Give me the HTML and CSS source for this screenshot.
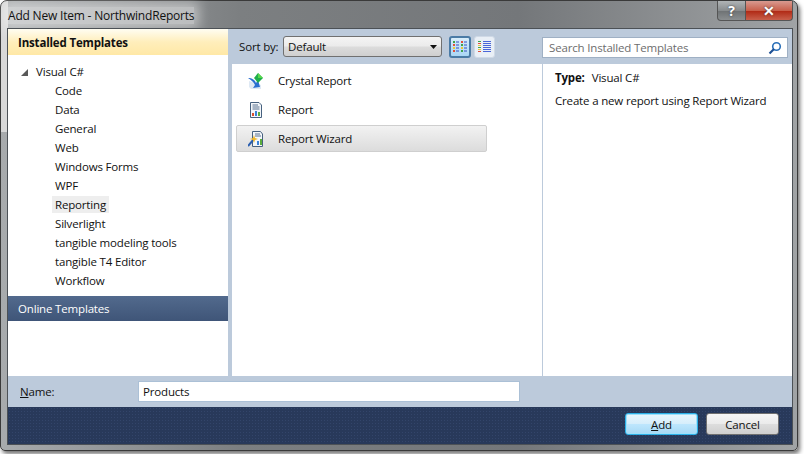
FILE: index.html
```html
<!DOCTYPE html>
<html lang="en">
<head>
<meta charset="utf-8">
<title>Add New Item - NorthwindReports</title>
<link rel="stylesheet" href="styles.css">
</head>
<body>
<div class="window">
  <div class="titlebar">
    <span class="title">Add New Item - NorthwindReports</span>
    <div class="caption">
      <span class="cap cap-help">?</span>
      <span class="cap cap-close">✕</span>
    </div>
  </div>
  <div class="client">
    <div class="main">
      <aside class="side">
        <div class="side-head">Installed Templates</div>
        <ul class="tree">
          <li class="tree-root"><svg class="arrow" width="7" height="7" viewBox="0 0 7 7"><path d="M7 0V7H0Z" fill="#595959"/></svg>Visual C#</li>
          <li>Code</li>
          <li>Data</li>
          <li>General</li>
          <li>Web</li>
          <li>Windows Forms</li>
          <li>WPF</li>
          <li class="sel">Reporting</li>
          <li>Silverlight</li>
          <li>tangible modeling tools</li>
          <li>tangible T4 Editor</li>
          <li>Workflow</li>
        </ul>
        <div class="side-online">Online Templates</div>
      </aside>
      <div class="center">
        <div class="toolbar">
          <span class="sort-label">Sort by:</span>
          <div class="combo"><span>Default</span><svg width="7" height="4" viewBox="0 0 7 4"><path d="M0 0H7L3.500 4Z" fill="#111"/></svg></div>
          <span class="view view-on"><svg width="18" height="16" viewBox="0 0 18 16"><use href="#cols"/></svg></span>
          <span class="view"><svg width="18" height="16" viewBox="0 0 18 16"><use href="#rows"/></svg></span>
        </div>
        <div class="list">
          <div class="item">
            <svg class="ico" width="16" height="16" viewBox="0 0 16 16"><path d="M1 8 L8 10 L13 12 L13 16 H3 L1 14Z" fill="#dfe9f4"/><path d="M0 5 C4 5 7 7 8 10 L10 7 L12 14 L5 15 L7 12 C6 9 3 7 0 5Z" fill="#2a6fd0"/><path d="M10 0 L15 5 L10 10 L6 5Z" fill="#1fae4c"/><path d="M10 0 L15 5 H10Z" fill="#58d84a"/></svg>
            <span>Crystal Report</span>
          </div>
          <div class="item">
            <svg class="ico" width="16" height="16" viewBox="0 0 16 16"><path d="M2.500 .5H11L13.500 3V15.500H2.500Z" fill="#f3f6fa" stroke="#47617f"/><path d="M4.500 3H10M4.500 5H11.500M4.500 7H11.500" stroke="#5a7290"/><rect x="4" y="11" width="2" height="3" fill="#d9502e"/><rect x="7" y="9" width="2" height="5" fill="#3a82d8"/><rect x="10" y="10" width="2" height="4" fill="#5aad3c"/></svg>
            <span>Report</span>
          </div>
          <div class="item item-sel">
            <svg class="ico" width="16" height="16" viewBox="0 0 16 16"><path d="M4.500 .5H12.500L14.500 3V15.500H4.500Z" fill="#f3f6fa" stroke="#47617f"/><path d="M7 3H12M7 5H13" stroke="#5a7290"/><rect x="9" y="10" width="2" height="4" fill="#3a82d8"/><rect x="12" y="8" width="2" height="6" fill="#5aad3c"/><path d="M0 15 L6 8" stroke="#2a5fb0" stroke-width="2"/><path d="M6 4 L7 7 L10 8 L7 9 L6 12 L5 9 L2 8 L5 7Z" fill="#f2b92c"/></svg>
            <span>Report Wizard</span>
          </div>
        </div>
      </div>
      <div class="right">
        <div class="search"><span>Search Installed Templates</span><svg width="14" height="14" viewBox="0 0 14 14"><circle cx="8.500" cy="5.500" r="3.800" fill="none" stroke="#2a6fb8" stroke-width="1.600"/><path d="M6 8 L1.500 12.500" stroke="#1c4f94" stroke-width="2.200"/></svg></div>
        <div class="details">
          <p class="type"><b>Type:</b><span>Visual C#</span></p>
          <p>Create a new report using Report Wizard</p>
        </div>
      </div>
    </div>
    <div class="namebar">
      <label class="name-label"><u>N</u>ame:</label>
      <div class="name-input">Products</div>
    </div>
    <div class="actions">
      <button class="btn btn-default"><u>A</u>dd</button>
      <button class="btn">Cancel</button>
    </div>
  </div>
</div>
<svg class="defs" width="0" height="0">
  <defs>
    <g id="cols">
      <rect x="2" y="2" width="2" height="2" fill="#3fa34d"/><rect x="2" y="5" width="2" height="2" fill="#e0503a"/><rect x="2" y="8" width="2" height="2" fill="#e8c83a"/><rect x="2" y="11" width="2" height="2" fill="#e0503a"/>
      <path d="M5 3H8M5 6H8M5 9H8M5 12H8" stroke="#3550c0"/>
      <rect x="10" y="2" width="2" height="2" fill="#e0503a"/><rect x="10" y="5" width="2" height="2" fill="#3fa34d"/><rect x="10" y="8" width="2" height="2" fill="#e8c83a"/><rect x="10" y="11" width="2" height="2" fill="#3fa34d"/>
      <path d="M13 3H16M13 6H16M13 9H16M13 12H16" stroke="#3550c0"/>
    </g>
    <g id="rows">
      <rect x="2" y="2" width="3" height="1" fill="#3fa34d"/><rect x="2" y="4" width="3" height="1" fill="#e0503a"/><rect x="2" y="6" width="3" height="1" fill="#e8c83a"/><rect x="2" y="8" width="3" height="1" fill="#3fa34d"/><rect x="2" y="10" width="3" height="1" fill="#e8c83a"/><rect x="2" y="12" width="3" height="1" fill="#e0503a"/>
      <path d="M7 2.500H15M7 4.500H15M7 6.500H15M7 8.500H15M7 10.500H15M7 12.500H15" stroke="#4a66d8"/>
    </g>
  </defs>
</svg>
</body>
</html>
```
FILE: styles.css
```css
* { box-sizing: border-box; }
html, body { margin: 0; padding: 0; }
body {
  width: 804px;
  height: 454px;
  background: #fff;
  overflow: hidden;
  font-family: "Open Sans", "Noto Sans", sans-serif;
  font-size: 11.500px;
  letter-spacing: -0.170px;
  color: #111;
}
.window {
  width: 798px;
  height: 451px;
  display: flex;
  flex-direction: column;
  padding: 0 5px 6px 7px;
  border: 1px solid #3a3a3a;
  border-radius: 7px 7px 5px 5px;
  background:
    linear-gradient(90deg, #d8d8d8 0, #d8d8d8 7px, transparent 7px) 0 0 / 100% 131px no-repeat,
    linear-gradient(90deg, #a8abad 0, #7c7f81 30%, #74777a 65%, #a0a3a5 100%);
  box-shadow: 2px 3px 4px rgba(0,0,0,.55);
}
.titlebar {
  height: 28px;
  flex: none;
  display: flex;
  justify-content: space-between;
}
.title {
  margin-top: 6px;
  height: 17px;
  font-size: 12px;
  letter-spacing: -0.200px;
  line-height: 17px;
  color: #111;
  background: rgba(255,255,255,.45);
  box-shadow: 0 0 12px 5px rgba(255,255,255,.45);
}
.caption { display: flex; height: 20px; margin-right: -1px; }
.cap {
  height: 20px;
  display: flex;
  align-items: center;
  justify-content: center;
  font-weight: 700;
  color: #fff;
  border: 1px solid #555;
  border-top: 0;
  text-shadow: 0 0 2px #333;
}
.cap-help {
  width: 29px;
  font-size: 14px;
  border-radius: 0 0 0 4px;
  background: linear-gradient(#b0b4b6, #888c8e 50%, #6e7274 52%, #8a8e90);
}
.cap-close {
  width: 47px;
  font-size: 14px;
  border-left: 0;
  border-radius: 0 0 4px 0;
  background: linear-gradient(#d89a90, #c8604c 50%, #b22c18 55%, #c8604c);
}
.client {
  flex: 1;
  min-height: 0;
  display: flex;
  flex-direction: column;
  outline: 1px solid #4c5156;
  background: #bccadb;
}
.main { flex: 1; min-height: 0; display: flex; }
.side {
  width: 220px;
  flex: none;
  background: #fff;
  display: flex;
  flex-direction: column;
}
.side-head {
  height: 26px;
  flex: none;
  padding: 0 10px;
  line-height: 27px;
  font-weight: 700;
  background: linear-gradient(#fffdf2, #ffeebb 50%, #ffe8a6);
  color: #111;
}
.tree {
  list-style: none;
  margin: 0;
  padding: 7px 0 0;
  flex: none;
  height: 241px;
}
.tree li {
  height: 19px;
  line-height: 19px;
  padding-left: 47px;
  white-space: nowrap;
}
.tree .tree-root { padding-left: 28px; display: block; position: relative; }
.arrow { position: absolute; left: 13px; top: 7px; }
.tree .sel { background: linear-gradient(#eeeeee, #eeeeee) 44px 1px / 57px 17px no-repeat; }
.side-online {
  height: 25px;
  flex: none;
  padding: 0 10px;
  line-height: 25px;
  color: #fff;
  background: linear-gradient(#526a8d, #3f5578);
}
.center { width: 310px; flex: none; display: flex; flex-direction: column; margin-left: 4px; }
.toolbar {
  height: 35px;
  flex: none;
  display: flex;
  align-items: center;
}
.sort-label { margin-left: 7px; width: 44px; flex: none; }
.combo {
  width: 159px;
  height: 21px;
  display: flex;
  align-items: center;
  justify-content: space-between;
  padding: 0 4px;
  border: 1px solid #707070;
  border-radius: 3px;
  background: linear-gradient(#f4f4f4, #ebebeb 48%, #dcdcdc 52%, #cfcfcf);
}
.view {
  width: 21px;
  height: 22px;
  display: flex;
  align-items: center;
  justify-content: center;
  margin-left: 3px;
  border: 1px solid #cfd9e6;
  border-radius: 3px;
  background: #e9eff6;
}
.view-on {
  width: 22px;
  margin-left: 7px;
  border: 2px solid #4a7ba6;
  background: linear-gradient(#d8edfa, #a9d6f5);
}
.list { flex: 1; background: #fff; padding-top: 2px; }
.item {
  height: 29px;
  display: flex;
  align-items: center;
  padding-left: 16px;
}
.item .ico { flex: none; margin-right: 14px; }
.item-sel {
  margin: 1px 55px 0 4px;
  padding-left: 11px;
  height: 27px;
  border: 1px solid #cfcfcf;
  border-radius: 2px;
  background: linear-gradient(#f2f2f2, #dcdcdc);
}
.right { flex: 1; display: flex; flex-direction: column; }
.search {
  height: 21px;
  flex: none;
  margin: 8px 4px 6px 0;
  display: flex;
  align-items: center;
  justify-content: space-between;
  padding: 0 5px 0 6px;
  border: 1px solid #9fb0c4;
  background: #fff;
  color: #6d6d6d;
}
.details {
  flex: 1;
  background: #fff;
  border-left: 1px solid #bccadb;
  padding: 5px 12px;
}
.details p { margin: 0 0 5px; line-height: 18px; white-space: nowrap; }
.type b { margin-right: 7px; }
.namebar {
  height: 31px;
  flex: none;
  display: flex;
  align-items: center;
  padding-left: 12px;
}
.name-label { width: 118px; flex: none; }
.name-input {
  width: 382px;
  height: 21px;
  padding-left: 4px;
  line-height: 19px;
  background: #fff;
  border: 1px solid #abc0d6;
}
.actions {
  height: 37px;
  flex: none;
  display: flex;
  justify-content: flex-end;
  align-items: flex-start;
  gap: 8px;
  padding: 6px 13px 0 0;
  background-color: #28395a;
  background-image: radial-gradient(#33456a 1px, transparent 1px);
  background-size: 3px 3px;
}
.btn {
  width: 73px;
  height: 22px;
  padding: 0;
  font: inherit;
  letter-spacing: inherit;
  color: #111;
  border: 1px solid #707070;
  border-radius: 3px;
  background: linear-gradient(#f6f6f6, #ebebeb 48%, #dddddd 52%, #cfcfcf);
}
.btn-default {
  border: 1px solid #2bb0e8;
  box-shadow: inset 0 0 0 1px #9fe0fa;
  background: linear-gradient(#eaf6fd, #d6eefb 48%, #bde6fd 52%, #a7d9f5);
}
.defs { position: absolute; }
```
